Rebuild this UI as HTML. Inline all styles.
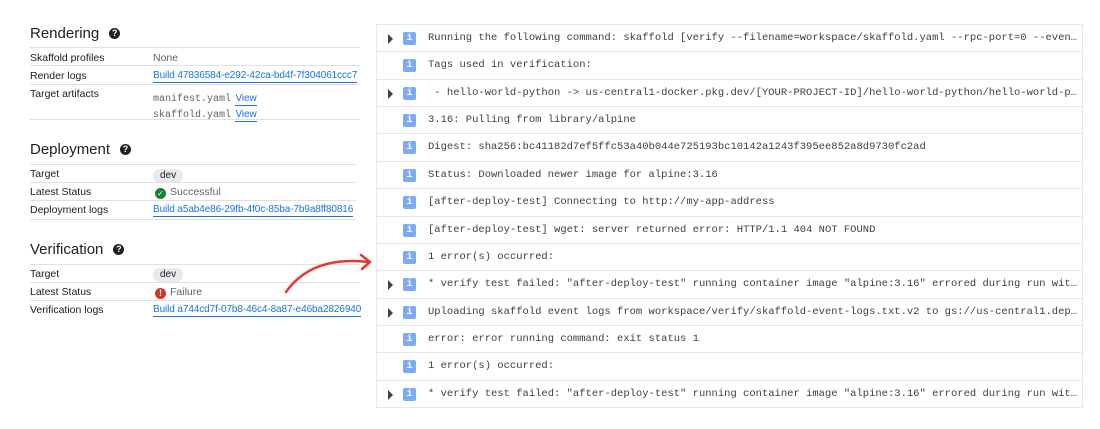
<!DOCTYPE html>
<html><head><meta charset="utf-8"><style>
*{margin:0;padding:0;box-sizing:border-box}
body{width:1100px;height:429px;background:#fff;position:relative;overflow:hidden;font-family:"Liberation Sans",sans-serif;color:#202124}
.a{position:absolute;white-space:nowrap}
.h{font-size:15px;font-weight:500;color:#202124}
.q{display:inline-block;width:11px;height:11px;border-radius:50%;background:#202124;color:#fff;font-size:9px;font-weight:bold;text-align:center;line-height:11px;margin-left:10px;vertical-align:2px}
.ln{position:absolute;height:1px;background:#e0e0e0}
.l{font-size:10.5px;color:#202124}
.v{font-size:10.5px;color:#5f6368}
.lk{font-size:10px;letter-spacing:-0.1px;color:#1a73e8;border-bottom:1px solid #1a73e8;padding-bottom:1px}
.m{font-family:"Liberation Mono",monospace;font-size:10px;color:#5f6368}
.chip{display:inline-block;background:#e8eaed;border-radius:8px;padding:0 7px;height:14px;line-height:14px;font-size:10px;color:#202124}
.log{position:absolute;left:376px;width:707px;border:1px solid #e8e8e8;border-bottom:none;top:24px}
.row{height:27.36px;border-bottom:1px solid #e8e8e8;position:relative}
.tri{position:absolute;left:11px;top:9px;width:0;height:0;border-left:5px solid #424242;border-top:5px solid transparent;border-bottom:5px solid transparent}
.ic{position:absolute;left:26px;top:7px;width:13px;height:13px;background:#7baaf7;border-radius:2px;color:#fff;font-family:"Liberation Mono",monospace;font-size:10px;font-weight:bold;text-align:center;line-height:13px}
.tx{position:absolute;left:51px;top:7px;width:651px;overflow:hidden;text-overflow:ellipsis;white-space:nowrap;font-family:"Liberation Mono",monospace;font-size:10.5px;color:#3c4043;line-height:13px}
</style></head><body>

<div class="a h" style="left:30px;top:25px">Rendering<span class="q">?</span></div>
<div class="ln" style="left:30px;top:47px;width:330px"></div>
<div class="a l" style="left:30px;top:52px">Skaffold profiles</div><div class="a v" style="left:153px;top:52px">None</div>
<div class="ln" style="left:30px;top:65px;width:330px"></div>
<div class="a l" style="left:30px;top:70px">Render logs</div><div class="a lk" style="left:153px;top:70px">Build 47836584-e292-42ca-bd4f-7f304061ccc7</div>
<div class="ln" style="left:30px;top:84px;width:330px"></div>
<div class="a l" style="left:30px;top:88px">Target artifacts</div>
<div class="a" style="left:153px;top:88px"><span class="m">manifest.yaml</span> <span class="lk">View</span></div>
<div class="a" style="left:153px;top:104px"><span class="m">skaffold.yaml</span> <span class="lk">View</span></div>
<div class="ln" style="left:30px;top:119px;width:330px"></div>

<div class="a h" style="left:30px;top:141px">Deployment<span class="q">?</span></div>
<div class="ln" style="left:30px;top:164px;width:326px"></div>
<div class="a l" style="left:30px;top:168px">Target</div><div class="a" style="left:153px;top:165px"><span class="chip">dev</span></div>
<div class="ln" style="left:30px;top:182px;width:326px"></div>
<div class="a l" style="left:30px;top:186px">Latest Status</div>
<div class="a v" style="left:155px;top:186px"><span style="display:inline-block;width:11px;height:11px;border-radius:50%;background:#188038;color:#fff;font-size:8px;text-align:center;line-height:11px;vertical-align:-1px;margin-right:4px">✓</span>Successful</div>
<div class="ln" style="left:30px;top:200px;width:326px"></div>
<div class="a l" style="left:30px;top:204px">Deployment logs</div><div class="a lk" style="left:153px;top:204px">Build a5ab4e86-29fb-4f0c-85ba-7b9a8ff80816</div>
<div class="ln" style="left:30px;top:219px;width:326px"></div>

<div class="a h" style="left:30px;top:241px">Verification<span class="q">?</span></div>
<div class="ln" style="left:30px;top:264px;width:330px"></div>
<div class="a l" style="left:30px;top:268px">Target</div><div class="a" style="left:153px;top:264px"><span class="chip">dev</span></div>
<div class="ln" style="left:30px;top:282px;width:330px"></div>
<div class="a l" style="left:30px;top:286px">Latest Status</div>
<div class="a v" style="left:155px;top:286px"><span style="display:inline-block;width:11px;height:11px;border-radius:50%;background:#d93025;color:#fff;font-size:9px;font-weight:bold;text-align:center;line-height:11px;vertical-align:-1px;margin-right:4px">!</span>Failure</div>
<div class="ln" style="left:30px;top:300px;width:330px"></div>
<div class="a l" style="left:30px;top:304px">Verification logs</div><div class="a lk" style="left:153px;top:304px">Build a744cd7f-07b8-46c4-8a87-e46ba2826940</div>

<svg class="a" style="left:270px;top:245px" width="110" height="60" viewBox="0 0 110 60">
<path d="M16 47 C35 20 65 13 99 17" fill="none" stroke="#e53935" stroke-width="2.5" stroke-linecap="round"/>
<path d="M91 10 L100 17 L92 24" fill="none" stroke="#e53935" stroke-width="2.5" stroke-linecap="round" stroke-linejoin="round"/>
</svg>

<div class="log">
<div class="row"><div class="tri"></div><div class="ic">i</div><div class="tx">Running the following command: skaffold [verify --filename=workspace/skaffold.yaml --rpc-port=0 --event-log-file=workspace/verify</div></div>
<div class="row"><div class="ic">i</div><div class="tx">Tags used in verification:</div></div>
<div class="row"><div class="tri"></div><div class="ic">i</div><div class="tx">&nbsp;- hello-world-python -&gt; us-central1-docker.pkg.dev/[YOUR-PROJECT-ID]/hello-world-python/hello-world-python:latest</div></div>
<div class="row"><div class="ic">i</div><div class="tx">3.16: Pulling from library/alpine</div></div>
<div class="row"><div class="ic">i</div><div class="tx">Digest: sha256:bc41182d7ef5ffc53a40b044e725193bc10142a1243f395ee852a8d9730fc2ad</div></div>
<div class="row"><div class="ic">i</div><div class="tx">Status: Downloaded newer image for alpine:3.16</div></div>
<div class="row"><div class="ic">i</div><div class="tx">[after-deploy-test] Connecting to http://my-app-address</div></div>
<div class="row"><div class="ic">i</div><div class="tx">[after-deploy-test] wget: server returned error: HTTP/1.1 404 NOT FOUND</div></div>
<div class="row"><div class="ic">i</div><div class="tx">1 error(s) occurred:</div></div>
<div class="row"><div class="tri"></div><div class="ic">i</div><div class="tx">* verify test failed: "after-deploy-test" running container image "alpine:3.16" errored during run with status code 1</div></div>
<div class="row"><div class="tri"></div><div class="ic">i</div><div class="tx">Uploading skaffold event logs from workspace/verify/skaffold-event-logs.txt.v2 to gs://us-central1.deploy-artifacts</div></div>
<div class="row"><div class="ic">i</div><div class="tx">error: error running command: exit status 1</div></div>
<div class="row"><div class="ic">i</div><div class="tx">1 error(s) occurred:</div></div>
<div class="row"><div class="tri"></div><div class="ic">i</div><div class="tx">* verify test failed: "after-deploy-test" running container image "alpine:3.16" errored during run with status code 1</div></div>
</div>
</body></html>
